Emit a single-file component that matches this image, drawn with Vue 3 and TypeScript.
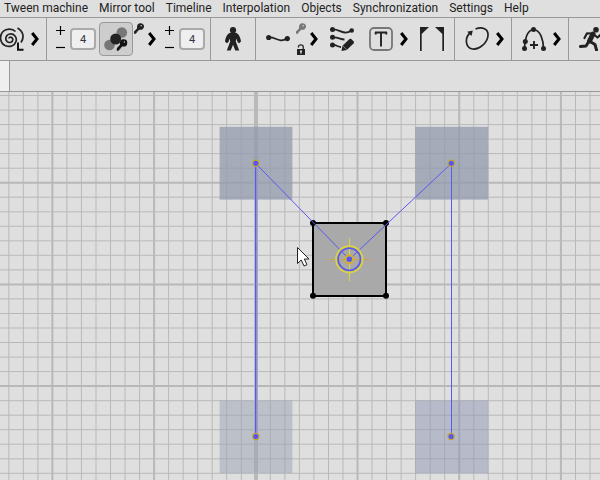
<script setup lang="ts">
import { ref } from 'vue'

const menus: string[] = [
  'Tween machine',
  'Mirror tool',
  'Timeline',
  'Interpolation',
  'Objects',
  'Synchronization',
  'Settings',
  'Help',
]

const leftFrames = ref('4')
const rightFrames = ref('4')

interface GridLine {
  at: number
  major: boolean
}

/* Seven minor cells make one major cell. */
const CELL = 14.53
function gridLines(origin: number, from: number, to: number): GridLine[] {
  const lines: GridLine[] = []
  for (let k = from; k <= to; k++) {
    lines.push({ at: Math.round((origin + k * CELL) * 10) / 10, major: k % 7 === 0 })
  }
  return lines
}
const columns = gridLines(255.8, -17, 120)
const rows = gridLines(182.7, -6, 80)

const ghosts = [
  { x: 219.6, y: 126.8, cls: 'ghost near' },
  { x: 415.3, y: 126.8, cls: 'ghost near' },
  { x: 219.6, y: 400.4, cls: 'ghost far' },
  { x: 415.3, y: 400.4, cls: 'ghost far violet' },
]
const keys = [
  { x: 255.8, y: 163.3 },
  { x: 451.3, y: 163.3 },
  { x: 255.8, y: 436.6 },
  { x: 451.1, y: 436.6 },
]
const corners = [
  { x: 313, y: 223 },
  { x: 386, y: 223 },
  { x: 313, y: 295.7 },
  { x: 386, y: 295.7 },
]
</script>

<template>
  <div class="app">
    <svg class="defs" aria-hidden="true">
      <symbol id="chevron" viewBox="0 0 8 16">
        <path d="M1.200 2 6 8 1.200 14" fill="none" stroke="#000" stroke-width="3" />
      </symbol>
      <symbol id="key" viewBox="0 0 10 11">
        <path
          fill="currentColor"
          fill-rule="evenodd"
          d="M5.700 .3C8.200-.3 10.300 1.500 10 3.800 9.700 6.300 7.500 7.300 5.500 6.700L4.700 7.600H4V8.600H2.900V9.600L1.700 10.700H0V8.600L3.200 5.200C2.500 3 3.600.9 5.700 .3ZM7.200 2.100A.7.7 0 1 0 7.200 3.500.7.7 0 0 0 7.200 2.100Z"
        />
      </symbol>
    </svg>

    <nav class="menubar">
      <button v-for="m in menus" :key="m" type="button" class="menu">{{ m }}</button>
    </nav>

    <header class="toolbar">
      <div class="group first">
        <button type="button" class="tool" aria-label="Loop">
          <svg width="24" height="24" viewBox="0 0 24 24">
            <g fill="none" stroke="#222" stroke-width="1.700">
              <path d="M9 11.500C9 9.300 12.500 9.700 12.800 12.200 13 15 9.500 16.500 7.200 14.600 4.700 12.300 5.800 7.600 9.800 7 14.200 6.400 17.300 10.300 16 14.400 14.500 19 9.800 20.500 5.500 18.700 0 16.500-1 8.500 3 4.500 6.500 1 12.500 1.500 15.500 4.500" />
              <path d="M17.500 1C23.500 4.500 24.500 10.500 21 15.500" />
            </g>
            <path d="M18 15.500V22.800H23.500" fill="none" stroke="#111" stroke-width="2" />
          </svg>
        </button>
        <button type="button" class="more" aria-label="More loop tools"><svg><use href="#chevron" /></svg></button>
      </div>

      <div class="group tween">
        <div class="steps">
          <button type="button" class="step" aria-label="Increase previous"><svg><path d="M4.500 0V9M0 4.500H9" /></svg></button>
          <button type="button" class="step" aria-label="Decrease previous"><svg><path d="M0 4.500H9" /></svg></button>
        </div>
        <input v-model="leftFrames" class="count" aria-label="Previous frames" />
        <button type="button" class="tool active" aria-label="Onion skin">
          <svg width="24" height="24" viewBox="0 0 24 24">
            <circle cx="17.800" cy="5.500" r="5.300" fill="#777" />
            <circle cx="5.500" cy="18" r="5.300" fill="#777" />
            <circle cx="11.700" cy="12" r="5.500" fill="#222" />
            <svg x="12" y="12" width="12" height="12" viewBox="-1 -1 12 13" color="#bbb" stroke="#bbb" stroke-width="1"><use href="#key" width="10" height="11" /></svg>
            <svg x="12" y="12" width="12" height="12" viewBox="0 0 10 11" color="#111"><use href="#key" width="10" height="11" /></svg>
          </svg>
        </button>
        <button type="button" class="side" aria-label="Key frames only"><svg><use href="#key" /></svg></button>
        <button type="button" class="more" aria-label="More onion skin tools"><svg><use href="#chevron" /></svg></button>
        <div class="steps second">
          <button type="button" class="step" aria-label="Increase next"><svg><path d="M4.500 0V9M0 4.500H9" /></svg></button>
          <button type="button" class="step" aria-label="Decrease next"><svg><path d="M0 4.500H9" /></svg></button>
        </div>
        <input v-model="rightFrames" class="count" aria-label="Next frames" />
      </div>

      <div class="group">
        <button type="button" class="tool" aria-label="Character">
          <svg width="24" height="24" viewBox="0 0 24 24">
            <circle cx="12" cy="3.200" r="3.100" fill="#222" />
            <path fill="#222" d="M9 5.800H15C17.600 6.600 19.500 10.500 20 14.500L18.200 16.200 16.700 15.200 15.200 11.500 14.800 14.500 18.200 23.500H14.300L12 17.800 9.700 23.500H5.800L9.200 14.500 8.800 11.500 7.300 15.200 5.800 16.200 4 14.500C4.500 10.500 6.400 6.600 9 5.800Z" />
          </svg>
        </button>
      </div>

      <div class="group wide">
        <button type="button" class="tool" aria-label="Curve">
          <svg width="24" height="24" viewBox="0 0 24 24">
            <path d="M3 10.500C9 9.500 13 16.500 21 11.500" fill="none" stroke="#222" stroke-width="1.700" />
            <circle cx="2.700" cy="10.500" r="2.600" fill="#222" />
            <circle cx="21.300" cy="11.600" r="2.600" fill="#222" />
          </svg>
        </button>
        <div class="pair">
          <button type="button" class="side dim" aria-label="Curve keys"><svg><use href="#key" /></svg></button>
          <button type="button" class="side lock" aria-label="Unlock">
            <svg viewBox="0 0 10 11">
              <path d="M2.500 3.500V2.500C2.500.2 7.200.2 7.200 2.500V5.500" fill="none" stroke="#222" stroke-width="1.300" />
              <path fill="#222" fill-rule="evenodd" d="M1 5H9V11H1ZM5 6.300A1.200 1.200 0 0 0 4.500 8.500V9.800H5.500V8.500A1.200 1.200 0 0 0 5 6.300Z" />
            </svg>
          </button>
        </div>
        <button type="button" class="more" aria-label="More curve tools"><svg><use href="#chevron" /></svg></button>
        <button type="button" class="tool" aria-label="Edit curves">
          <svg width="24" height="24" viewBox="0 0 24 24">
            <g fill="none" stroke="#222" stroke-width="1.800">
              <path d="M2.500 2.500C9 1.500 13 9 21.500 3.500M2.500 10.500C7 9.500 10 12.500 14.500 12.500M2.500 18C6 17.500 8 20 11 20" />
            </g>
            <g fill="#222">
              <circle cx="2.500" cy="2.500" r="2.500" />
              <circle cx="21.700" cy="3.500" r="2.300" />
              <circle cx="2.500" cy="10.300" r="2.500" />
              <circle cx="2.500" cy="18" r="2.500" />
              <path d="M12.500 18.800 19.500 12 21 11.700 24 14.700 23.700 16.200 16.800 23 11.500 24Z" />
            </g>
            <path d="M13 19 16.800 22.700" stroke="#ddd" stroke-width=".5" />
          </svg>
        </button>
        <button type="button" class="tool text" aria-label="Text">
          <svg width="24" height="24" viewBox="0 0 24 24">
            <rect x="1" y="1" width="22" height="22" rx="4" fill="none" stroke="#777" stroke-width="1.800" />
            <path d="M6 5.500H18M12 5.500V19.500M6.700 5V7.500M17.300 5V7.500" fill="none" stroke="#222" stroke-width="1.900" />
          </svg>
        </button>
        <button type="button" class="more" aria-label="More text tools"><svg><use href="#chevron" /></svg></button>
        <button type="button" class="tool" aria-label="Frame range">
          <svg width="24" height="24" viewBox="0 0 24 24" fill="#222">
            <path d="M0 0H9L1.700 7V24H0ZM24 0H15L22.300 7V24H24Z" />
          </svg>
        </button>
      </div>

      <div class="group cycle">
        <button type="button" class="tool" aria-label="Cycle">
          <svg width="24" height="24" viewBox="0 0 24 24">
            <path d="M10.500 2C17-.5 23.500 1.500 23 8.500 22.500 16 14 23 7.500 22 0 20.500-.5 10.500 5.500 5.500" fill="none" stroke="#222" stroke-width="1.700" />
            <path d="M2.200 4.700 7.800 3.500 6.500 9Z" fill="#222" />
          </svg>
        </button>
        <button type="button" class="more" aria-label="More cycle tools"><svg><use href="#chevron" /></svg></button>
      </div>

      <div class="group cycle">
        <button type="button" class="tool" aria-label="Add curve point">
          <svg width="24" height="24" viewBox="0 0 24 24">
            <path d="M2.500 22C2.500 13 5 3 11.500 2.500 18.500 3 21.500 13 21.500 22" fill="none" stroke="#222" stroke-width="1.700" />
            <g fill="#222">
              <circle cx="11.500" cy="2.500" r="2.500" />
              <circle cx="3.300" cy="14.500" r="2.500" />
              <circle cx="2.500" cy="21.500" r="2.500" />
              <circle cx="21.500" cy="21.500" r="2.500" />
            </g>
            <path d="M12 14V22M8 18H16" stroke="#222" stroke-width="1.900" />
          </svg>
        </button>
        <button type="button" class="more" aria-label="More point tools"><svg><use href="#chevron" /></svg></button>
      </div>

      <div class="group last">
        <button type="button" class="tool" aria-label="Run">
          <svg width="24" height="24" viewBox="0 0 24 24">
            <circle cx="17" cy="2.800" r="2.800" fill="#222" />
            <g fill="none" stroke="#222" stroke-linecap="round" stroke-linejoin="round">
              <path d="M14 7 10.500 14" stroke-width="5" />
              <path d="M13 6.500 8 6.300 5.500 11M15.500 8 18.500 10.500 23 6.500" stroke-width="2.200" />
              <path d="M9.500 15 7 19 1.500 19.500M11 14.500 16 17.500 17.500 23" stroke-width="3" />
            </g>
          </svg>
        </button>
      </div>
    </header>

    <div class="tabs"><button type="button" class="tab" aria-label="Scene"></button></div>

    <main class="stage">
      <svg class="drawing">
        <g transform="translate(0 -92)">
          <g class="grid">
            <line v-for="c in columns" :key="'c' + c.at" :x1="c.at" :x2="c.at" y1="0" y2="1400" :class="{ major: c.major }" />
            <line v-for="r in rows" :key="'r' + r.at" x1="0" x2="2000" :y1="r.at" :y2="r.at" :class="{ major: r.major }" />
          </g>
          <line class="axis" x1="256" x2="256" y1="0" y2="1400" />
          <rect v-for="g in ghosts" :key="g.x + '-' + g.y" :x="g.x" :y="g.y" width="72.800" height="72.800" :class="g.cls" />
          <rect class="shape" x="313" y="223" width="73" height="73" />
          <circle v-for="c in corners" :key="c.x + '-' + c.y" :cx="c.x" :cy="c.y" r="3" />
          <line class="soft" x1="256.500" x2="256.500" y1="163" y2="436" />
          <path class="link" d="M255.500 436V163.300L349.300 259.300 451.500 163.300V436" />
          <g class="target">
            <path class="cross" d="M349.500 238V281" />
            <path class="cross side-arm" d="M328 259.500H371" />
            <circle class="inner" cx="349.300" cy="259.300" r="11.200" />
            <circle cx="349.300" cy="259.300" r="13.200" />
            <circle class="core" cx="349.300" cy="259.300" r="4" />
            <circle class="dot" cx="349.300" cy="259.300" r="2.700" />
          </g>
          <g v-for="k in keys" :key="k.x + '-' + k.y">
            <circle class="halo" :cx="k.x" :cy="k.y" r="3" />
            <circle class="dot" :cx="k.x" :cy="k.y" r="2.500" />
          </g>
          <path class="pointer" d="M297.500 247.500V263.500L301.200 260 304 266 307 264.700 304.300 259H309Z" />
        </g>
      </svg>
    </main>
  </div>
</template>

<style>
body {
  background: #dfdfdf;
}
</style>

<style scoped>
.app {
  display: flex;
  flex-direction: column;
  height: 100vh;
  overflow: hidden;
  color: #222;
  font-family: Roboto, sans-serif;
}
.defs {
  display: none;
}
button {
  display: flex;
  padding: 0;
  border: 0;
  background: none;
  color: inherit;
  font: inherit;
}
.menubar {
  display: flex;
  gap: 11px;
  height: 17px;
  padding-left: 4px;
  font-size: 12px;
  line-height: 16px;
}
.menu {
  flex: none;
  white-space: nowrap;
}
.toolbar {
  display: flex;
  height: 42px;
  border-top: 1px solid #999;
  border-bottom: 1px solid #999;
}
.group {
  display: flex;
  flex: none;
  align-items: center;
  padding: 0 10px;
  border-right: 1px solid #999;
}
.first {
  gap: 7px;
  padding: 0 7px 0 0;
}
.tween {
  padding: 0 5px 0 9px;
}
.cycle {
  gap: 7px;
  padding-right: 7px;
}
.last {
  border-right: 0;
}
.tool,
.tool svg {
  flex: none;
}
.more svg {
  width: 8px;
  height: 16px;
}
.steps {
  display: flex;
  flex-direction: column;
  gap: 8px;
  margin-right: 5px;
}
.second {
  margin-left: 9px;
}
.step svg {
  width: 9px;
  height: 9px;
  fill: none;
  stroke: #000;
  stroke-width: 1.200;
}
.count {
  box-sizing: border-box;
  width: 26px;
  height: 22px;
  padding: 0;
  border: 2px solid #aaa;
  border-radius: 4px;
  background: #efefef;
  color: #334;
  font: 11px Roboto, sans-serif;
  text-align: center;
}
.active {
  box-sizing: border-box;
  width: 34px;
  height: 34px;
  padding: 4px;
  margin-left: 3px;
  border: 1px solid #999;
  border-radius: 4px;
  background: #cdcdcd;
}
.side svg {
  width: 10px;
  height: 11px;
}
.active + .side {
  align-self: flex-start;
  margin: 5px 4px 0 1px;
}
.dim {
  color: #777;
}
.pair {
  display: flex;
  flex-direction: column;
  gap: 10px;
  margin: 0 4px 0 6px;
}
.wide .more + .tool {
  margin-left: 12px;
}
.wide .text {
  margin: 0 7px 0 15px;
}
.tabs {
  display: flex;
  height: 30px;
  border-bottom: 1px solid #999;
}
.tab {
  width: 10px;
  border-right: 1px solid #999;
  background: #efefef;
}
.stage {
  flex: 1;
  min-height: 0;
}
.drawing {
  display: block;
  width: 100%;
  height: 100%;
}
.grid line {
  stroke: #b9b9b9;
  stroke-width: 1;
}
.grid .major {
  stroke: #b8b8b8;
  stroke-width: 2;
}
.axis {
  stroke: #b9b9b9;
  stroke-width: 4;
}
.ghost {
  fill: rgba(146, 154, 172, 0.75);
}
.ghost.far {
  fill: rgba(153, 161, 179, 0.5);
}
.ghost.violet {
  fill: rgba(143, 149, 177, 0.5);
}
.shape {
  fill: #a9a9a9;
  stroke: #000;
  stroke-width: 2;
}
.soft {
  stroke: #8f8fd0;
  stroke-width: 2;
}
.link {
  fill: none;
  stroke: #5a5af0;
  stroke-width: 1;
}
.target circle {
  fill: none;
  stroke: #ddd33c;
  stroke-width: 1.800;
}
.target .inner {
  stroke: #5c5ce8;
}
.target .core {
  stroke: #d4b024;
  stroke-width: 2;
}
.cross {
  stroke: #ddd33c;
  stroke-width: 1;
}
.side-arm {
  stroke: #c9a550;
}
.halo {
  fill: none;
  stroke: #c4a630;
  stroke-width: 1.500;
}
.dot,
.target .dot {
  fill: #5555f5;
  stroke: none;
}
.pointer {
  fill: #fff;
  stroke: #222;
  stroke-width: 1;
}
</style>
